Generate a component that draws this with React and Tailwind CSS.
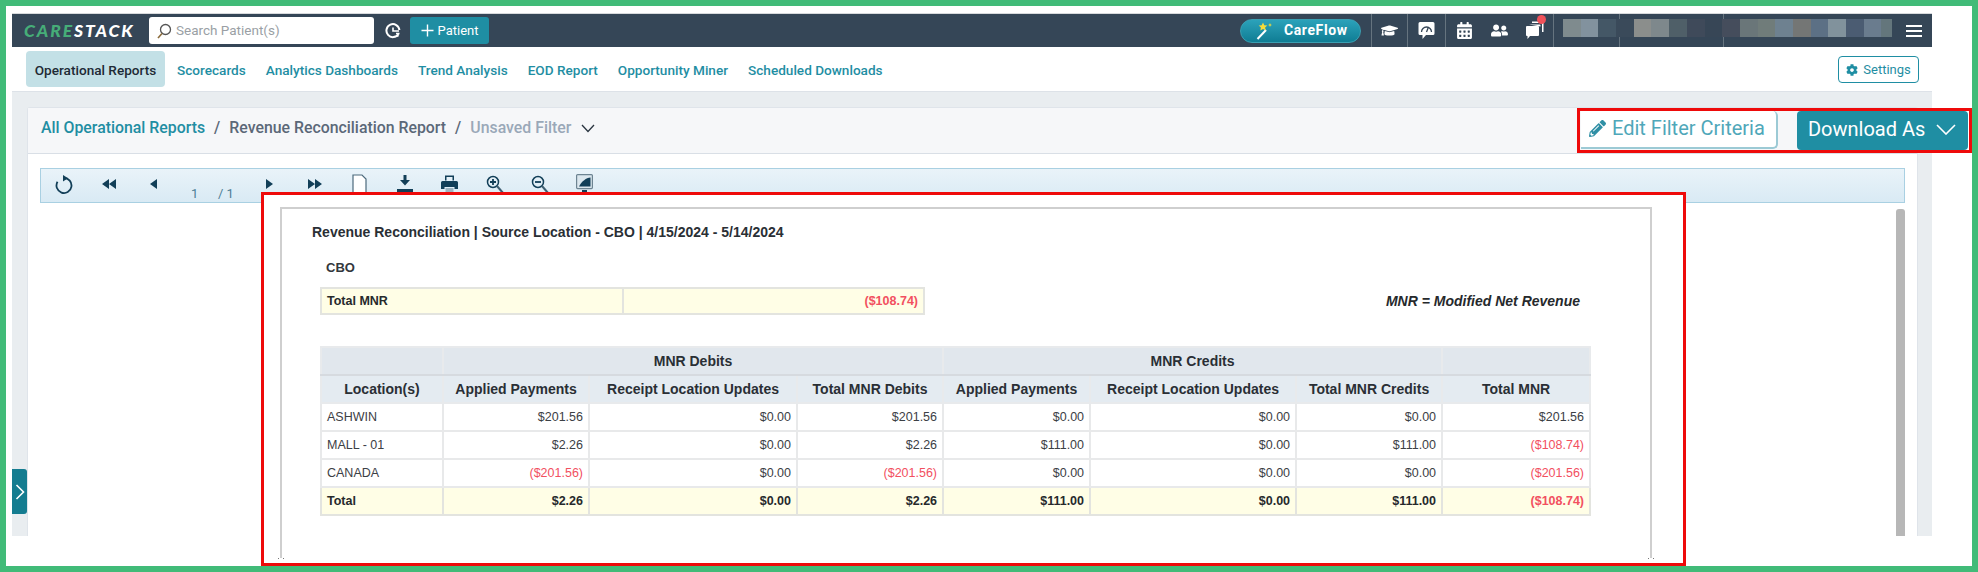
import React from "react";
import { FaGraduationCap, FaCalendarAlt, FaUserFriends, FaPencilAlt, FaCog } from "react-icons/fa";

const NAVY = "#123f58";

function Logo() {
  return (
    <div className="w-[111px] ml-[12px] font-['Lato',sans-serif] font-black italic text-[17.5px] leading-none tracking-[1.9px] whitespace-nowrap">
      <span className="text-[#46ad78]">CARE</span>
      <span className="text-white">STACK</span>
    </div>
  );
}

const blocks = ["#7f8b8e","#82929e","#445766","#3a4a5a","#8b8e8c","#7e888c","#4f5f68","#3f4a5a","#374656","#454d5c","#6a7679","#707c7a","#6e8190","#747675","#5c7085","#81929c","#4b5c72","#6a7c8e"];

function Header() {
  return (
    <div className="h-[33px] bg-[#354657] flex items-center relative">
      <Logo />
      <div className="ml-[14px] w-[225px] h-[27px] bg-white rounded-[3px] flex items-center pl-[7px]">
        <svg width="16" height="16" viewBox="0 0 16 16" fill="none" stroke="#555" strokeWidth="1.3">
          <circle cx="9.5" cy="6.5" r="5" />
          <path d="M6 10.5 2 15" stroke="#8a6a3a" strokeWidth="1.6" />
        </svg>
        <span className="ml-[4px] text-[13.5px] text-[#9a9fa5]">Search Patient(s)</span>
      </div>
      <svg className="ml-[11px]" width="16" height="16" viewBox="0 0 16 16" fill="none" stroke="white" strokeWidth="2">
        <path d="M13.5 11A6.5 6.5 0 1 1 14.4 7" />
        <path d="M8 4.5V8h6" strokeWidth="1.6" />
        <path d="M11 10.5h3.5M11 13h2.5" strokeWidth="1.3" />
      </svg>
      <button className="ml-[9px] w-[79px] h-[27px] bg-[#1f8ea3] rounded-[3px] flex items-center justify-center gap-[4px] text-white text-[13px]">
        <svg width="13" height="13" viewBox="0 0 13 13" stroke="white" strokeWidth="1.4"><path d="M6.5 0.5v12M0.5 6.5h12" /></svg>
        Patient
      </button>
      <div className="flex-1" />
      <button className="w-[121px] h-[24px] rounded-full bg-gradient-to-b from-[#2ba2ba] to-[#0e7d94] flex items-center text-white text-[14px] font-bold tracking-[0.6px] pl-[15px] gap-[8px] mr-[10px] border border-[#3a9fb2]">
        <svg width="20" height="18" viewBox="0 0 20 18">
          <path d="M1.5 17 10 8" stroke="white" strokeWidth="2" />
          <path d="M7 0.5l1.3 2.8 3 .3-2.2 2 .6 3-2.7-1.5-2.7 1.5.6-3-2.2-2 3-.3z" fill="#f5dc3a" />
          <path d="M14 1l.6 1.4 1.4.6-1.4.6-.6 1.4-.6-1.4L12 3l1.4-.6z" fill="#f5dc3a" />
        </svg>
        CareFlow
      </button>
      <div className="h-full w-[36px] border-l border-[#66747f] flex items-center justify-center">
        <FaGraduationCap className="text-white text-[17px]" />
      </div>
      <div className="h-full w-[38px] border-l border-[#66747f] flex items-center justify-center">
        <svg width="17" height="19" viewBox="0 0 17 19">
          <path d="M2 1h13a1.500 1.500 0 0 1 1.500 1.500v10a1.500 1.500 0 0 1-1.500 1.500H8l-3.500 4v-4H2A1.500 1.500 0 0 1 .5 12.500v-10A1.500 1.500 0 0 1 2 1z" fill="white" />
          <path d="M3.500 11a5 5 0 1 1 10 0" fill="none" stroke="#354657" strokeWidth="1.300" />
          <path d="M8.500 11 10.500 6" stroke="#354657" strokeWidth="1.300" />
        </svg>
      </div>
      <div className="h-full w-[108px] border-l border-[#66747f] flex items-center pl-[10px] gap-[18px]">
        <FaCalendarAlt className="text-white text-[17px]" />
        <FaUserFriends className="text-white text-[17px]" />
        <div className="relative w-[17px] h-[20px]">
          <svg width="18" height="20" viewBox="0 0 18 20" fill="white">
            <path d="M6 0.500h10.500a1 1 0 0 1 1 1V11h-1.500V2H6z" />
            <path d="M3 3.500h10.500a1 1 0 0 1 1 1v1" />
            <path d="M1 5h11a1 1 0 0 1 1 1v8a1 1 0 0 1-1 1H4l-2.500 3v-3H1a1 1 0 0 1-1-1V6a1 1 0 0 1 1-1z" />
          </svg>
          <span className="absolute -top-[6px] left-[11px] w-[9px] h-[9px] rounded-full bg-[#f0525a]" />
        </div>
      </div>
      <div className="h-full w-[66px] border-l border-[#66747f]" />
      <div className="h-full w-[104px] border-l border-[#66747f]" />
      <div className="h-full w-[209px] border-l border-[#66747f] flex items-center justify-end pr-[10px]">
        <svg width="16" height="12" viewBox="0 0 16 12" fill="white">
          <rect width="16" height="2" />
          <rect y="5" width="16" height="2" />
          <rect y="10" width="16" height="2" />
        </svg>
      </div>
      <div className="absolute left-[1551px] top-[5px] h-[18px] flex">
        {blocks.map((c, i) => (
          <div key={i} className="w-[17.7px] h-full" style={{ backgroundColor: c }} />
        ))}
        <div className="w-[11px] h-full bg-[#64767c]" />
      </div>
    </div>
  );
}

function Nav() {
  const items = ["Scorecards", "Analytics Dashboards", "Trend Analysis", "EOD Report", "Opportunity Miner", "Scheduled Downloads"];
  return (
    <div className="h-[45px] bg-white border-b border-[#dde2e8] flex items-center pl-[14px] pr-[13px]">
      <div className="w-[139px] h-[36px] bg-[#c3e0e6] rounded-[4px] flex items-center justify-center pt-[2px] text-[13.6px] font-medium text-[#1e2a35] mr-[12px]">
        Operational Reports
      </div>
      <div className="flex gap-[20px] pt-[2px]">
        {items.map((t) => (
          <span key={t} className="text-[13.6px] font-medium text-[#1f8ea3]">{t}</span>
        ))}
      </div>
      <div className="flex-1" />
      <button className="w-[81px] h-[27px] border border-[#1f8ea3] rounded-[4px] flex items-center justify-center gap-[5px] pt-[1px] text-[13px] text-[#1f8ea3] bg-white">
        <FaCog className="text-[12px]" />
        Settings
      </button>
    </div>
  );
}

function Cell({ children, className = "" }) {
  return <div className={"w-[45px] h-[24px] flex items-center justify-center shrink-0 " + className}>{children}</div>;
}

function Toolbar() {
  return (
    <div className="h-[35px] bg-gradient-to-b from-[#e9f3f9] to-[#d9eaf4] border border-[#a9d0e2] flex items-start pt-[3px]">
      <Cell>
        <svg width="18" height="19" viewBox="0 0 18 19" fill="none" stroke={NAVY} strokeWidth="1.800">
          <path d="M9 3A7.500 7.500 0 1 1 2.500 6.750" />
          <path d="M8 0 13 3.200 8 6.500z" fill={NAVY} stroke="none" />
        </svg>
      </Cell>
      <Cell>
        <svg width="14" height="10" viewBox="0 0 14 10" fill={NAVY}><path d="M7 0v10L0 5zM14 0v10L7 5z" /></svg>
      </Cell>
      <Cell>
        <svg width="7" height="10" viewBox="0 0 7 10" fill={NAVY}><path d="M7 0v10L0 5z" /></svg>
      </Cell>
      <div className="w-[71px] h-[24px] shrink-0 flex items-end text-[13px] text-[#4d7f96] leading-none pt-[5px]">
        <span className="w-[42px] pl-[15px] translate-y-[4px]">1</span>
        <span className="translate-y-[4px]">/ 1</span>
      </div>
      <Cell>
        <svg width="7" height="10" viewBox="0 0 7 10" fill={NAVY}><path d="M0 0v10l7-5z" /></svg>
      </Cell>
      <Cell>
        <svg width="14" height="10" viewBox="0 0 14 10" fill={NAVY}><path d="M0 0v10l7-5zM7 0v10l7-5z" /></svg>
      </Cell>
      <Cell>
        <svg width="15" height="20" viewBox="0 0 15 20" fill="white" stroke="#4d6a7c" strokeWidth="1.200"><path d="M1 1h9l4 4v14H1z" /></svg>
      </Cell>
      <Cell>
        <svg width="16" height="20" viewBox="0 0 16 20" fill={NAVY}>
          <path d="M6.500 1h3v5h3.500L8 11.500 3 6h3.500z" />
          <rect y="15" width="16" height="4" />
        </svg>
      </Cell>
      <Cell>
        <svg width="17" height="19" viewBox="0 0 17 19" fill={NAVY}>
          <path d="M4 0.500h9v5h-1.500V2h-6v3.500H4z" />
          <path d="M1.500 6h14A1.500 1.500 0 0 1 17 7.500V14h-3.500v-2h-10v2H0V7.500A1.500 1.500 0 0 1 1.500 6z" />
          <path d="M4.500 13h8v5.500h-8z" fill="#9fb4c0" />
        </svg>
      </Cell>
      <Cell>
        <svg width="18" height="19" viewBox="0 0 18 19" fill="none" stroke={NAVY} strokeWidth="1.500">
          <circle cx="7" cy="7" r="5.500" />
          <path d="M4 7h6M7 4v6" strokeWidth="1.800" />
          <path d="M11 11l6 7" stroke="#3f5f72" strokeWidth="2" />
        </svg>
      </Cell>
      <Cell>
        <svg width="18" height="19" viewBox="0 0 18 19" fill="none" stroke={NAVY} strokeWidth="1.500">
          <circle cx="7" cy="7" r="5.500" />
          <path d="M4 7h6" strokeWidth="1.800" />
          <path d="M11 11l6 7" stroke="#3f5f72" strokeWidth="2" />
        </svg>
      </Cell>
      <Cell>
        <svg width="17" height="20" viewBox="0 0 17 20">
          <rect x="0.600" y="0.600" width="15.800" height="14" rx="1" fill="#dbe7ee" stroke="#6d8492" strokeWidth="1.200" />
          <path d="M3 12.500C6 7 10 4 14.500 3.500v9z" fill={NAVY} />
          <rect x="6" y="16" width="5" height="3" fill={NAVY} />
        </svg>
      </Cell>
    </div>
  );
}

function Main() {
  return (
    <div className="h-[444px] bg-[#e9edf0] pl-[15px] pr-[14px] pt-[15px] relative">
      <div className="h-[429px] bg-white border-x border-t border-[#dfe4ea] rounded-t-[3px] flex flex-col">
        <div className="h-[46px] shrink-0 bg-[#f6f7f9] border-b border-[#d9dfe6] flex items-center pl-[13px] text-[15.85px] font-medium whitespace-nowrap pb-[5px]">
          <span className="text-[#1f8ea3]">All Operational Reports</span>
          <span className="text-[#5b6878] mx-[9px]">/</span>
          <span className="text-[#5b6878]">Revenue Reconciliation Report</span>
          <span className="text-[#5b6878] mx-[9px]">/</span>
          <span className="text-[#9aa8b8]">Unsaved Filter</span>
          <svg className="ml-[10px]" width="14" height="9" viewBox="0 0 14 9" fill="none" stroke="#2a3540" strokeWidth="1.300"><path d="M1 1l6 6.500L13 1" /></svg>
        </div>
        <div className="flex-1 flex flex-col pt-[14px] pl-[12px] pr-[12px]">
          <Toolbar />
          <div className="flex-1 flex justify-end mt-[6px]">
            <div className="w-[9px] bg-[#b7b7b7] rounded-t-[3px]" />
          </div>
        </div>
      </div>
      <button className="absolute left-0 top-[377px] w-[15px] h-[45px] bg-[#147c90] rounded-r-[3px] flex items-center justify-center">
        <svg width="10" height="16" viewBox="0 0 10 16" fill="none" stroke="white" strokeWidth="1.600"><path d="M1.500 1 8.500 8l-7 7" /></svg>
      </button>
    </div>
  );
}

const th = "border-2 border-[#e8eaec] text-[14px] font-bold text-[#2a2f35] text-center align-middle p-0";
const tdBase = "border-2 border-[#e8e9ea] text-[12.5px] text-[#3c4045]";
const tfBase = "border-2 border-[#e3e4df] text-[12.5px] font-bold text-[#26292c] bg-[#fffee6]";
const num = " text-right pr-[5px]";
const lab = " text-left pl-[5px]";

function Row({ name, vals }) {
  return (
    <tr className="h-[28px]">
      <td className={tdBase + lab}>{name}</td>
      {vals.map((v, i) => (
        <td key={i} className={tdBase.replace("text-[#3c4045]", v.startsWith("(") ? "text-[#f2505f]" : "text-[#3c4045]") + num}>{v}</td>
      ))}
    </tr>
  );
}

function Corner({ className }) {
  return (
    <div className={"absolute -bottom-[1px] flex gap-[4px] " + className}>
      <span className="w-[1px] h-[1px] bg-[#777]" />
      <span className="w-[1px] h-[1px] bg-[#777]" />
    </div>
  );
}

function Report() {
  const cols = [122, 146, 208, 146, 147, 206, 146, 148];
  return (
    <div className="absolute left-[255px] top-[186px] w-[1425px] h-[374px] bg-white border-[3px] border-[#ee0a0a] pl-[16px] pt-[12px] pb-[5px] font-['Liberation_Sans',sans-serif]">
      <div className="relative w-[1372px] h-full border-x-2 border-t-2 border-[#cfcfcf] pl-[30px] pt-[14px]">
        <div className="text-[14px] font-bold text-[#2a2f35] leading-[18px] whitespace-nowrap">
          Revenue Reconciliation | Source Location - CBO | 4/15/2024 - 5/14/2024
        </div>
        <div className="ml-[14px] mt-[19px] text-[13px] font-bold text-[#33373c] leading-[16px]">CBO</div>
        <div className="flex items-center ml-[8px] mt-[11px] w-[1268px] justify-between">
          <table className="w-[605px] h-[28px] border-collapse table-fixed">
            <tbody>
              <tr>
                <td className={tfBase + lab + " w-[302px]"}>Total MNR</td>
                <td className={tfBase.replace("text-[#26292c]", "text-[#f2505f]") + num}>($108.74)</td>
              </tr>
            </tbody>
          </table>
          <div className="text-[14px] font-bold italic text-[#26292c] whitespace-nowrap pr-[8px]">MNR = Modified Net Revenue</div>
        </div>
        <table className="ml-[8px] mt-[31px] w-[1268px] border-collapse table-fixed">
          <colgroup>
            {cols.map((w, i) => <col key={i} style={{ width: w }} />)}
          </colgroup>
          <thead>
            <tr className="h-[28px] bg-[#e1e7ed]">
              <th className={th + " border-b-[#d6dadf]"}></th>
              <th className={th + " border-b-[#d6dadf]"} colSpan={3}>MNR Debits</th>
              <th className={th + " border-b-[#d6dadf]"} colSpan={3}>MNR Credits</th>
              <th className={th + " border-b-[#d6dadf]"}></th>
            </tr>
            <tr className="h-[28px] bg-[#e4ebf1]">
              {["Location(s)", "Applied Payments", "Receipt Location Updates", "Total MNR Debits", "Applied Payments", "Receipt Location Updates", "Total MNR Credits", "Total MNR"].map((t, i) => (
                <th key={i} className={th}>{t}</th>
              ))}
            </tr>
          </thead>
          <tbody>
            <Row name="ASHWIN" vals={["$201.56", "$0.00", "$201.56", "$0.00", "$0.00", "$0.00", "$201.56"]} />
            <Row name="MALL - 01" vals={["$2.26", "$0.00", "$2.26", "$111.00", "$0.00", "$111.00", "($108.74)"]} />
            <Row name="CANADA" vals={["($201.56)", "$0.00", "($201.56)", "$0.00", "$0.00", "$0.00", "($201.56)"]} />
            <tr className="h-[28px]">
              <td className={tfBase + lab}>Total</td>
              {["$2.26", "$0.00", "$2.26", "$111.00", "$0.00", "$111.00", "($108.74)"].map((v, i) => (
                <td key={i} className={tfBase.replace("text-[#26292c]", v.startsWith("(") ? "text-[#f2505f]" : "text-[#26292c]") + num}>{v}</td>
              ))}
            </tr>
          </tbody>
        </table>
        <Corner className="-left-[4px]" />
        <Corner className="-right-[4px]" />
      </div>
    </div>
  );
}

function Actions() {
  return (
    <div className="absolute left-[1571px] top-[102px] w-[395px] h-[45px] border-[3px] border-[#ee0a0a] flex pl-[1px] pr-[1px]">
      <button className="w-[198px] h-[38px] bg-white border-r-2 border-b-2 border-[#9ccad5] rounded-br-[5px] rounded-tr-[5px] flex items-center pl-[8px] pb-[2px] gap-[6px] text-[20px] text-[#4fa7b9] whitespace-nowrap">
        <FaPencilAlt className="text-[17px] text-[#2f8fa5]" />
        Edit Filter Criteria
      </button>
      <button className="ml-[19px] w-[172px] h-[39px] bg-[#1f8ea3] rounded-[4px] flex items-center pl-[11px] pb-[3px] gap-[11px] text-[20px] text-white whitespace-nowrap">
        Download As
        <svg width="20" height="11" viewBox="0 0 20 11" fill="none" stroke="white" strokeWidth="1.600"><path d="M1 1l9 9 9-9" /></svg>
      </button>
    </div>
  );
}

export default function App() {
  return (
    <div className="w-[1978px] h-[572px] border-[6px] border-[#41bb78] bg-white relative overflow-hidden font-['Roboto',sans-serif]">
      <div className="ml-[6px] mt-[7px] w-[1920px] border-t border-[#d8dadd]">
        <Header />
        <Nav />
        <Main />
      </div>
      <Report />
      <Actions />
    </div>
  );
}
